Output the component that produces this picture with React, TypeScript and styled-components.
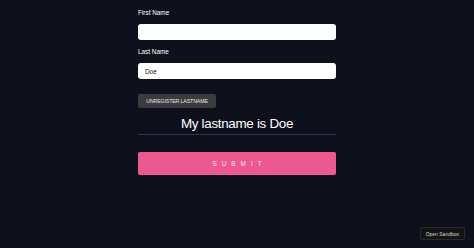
import styled, { createGlobalStyle } from "styled-components";

const GlobalStyle = createGlobalStyle`
  html, body {
    margin: 0;
    padding: 0;
    background: #0e101c;
    font-family: "Liberation Sans", Arial, sans-serif;
  }
  * { box-sizing: border-box; }
`;

const Page = styled.div`
  width: 474px;
  height: 248px;
  background: #0e101c;
  overflow: hidden;
`;

const Form = styled.form`
  width: 198px;
  margin: 0 auto;
  display: flex;
  flex-direction: column;
`;

const Label = styled.label<{ $top: number }>`
  font-size: 6.4px;
  line-height: 8px;
  color: #ffffff;
  margin-top: ${({ $top }) => $top}px;
`;

const Input = styled.input`
  margin-top: 7px;
  height: 16px;
  width: 100%;
  border: none;
  border-radius: 3px;
  background: #ffffff;
  padding: 0 7px;
  font-family: inherit;
  font-size: 6.4px;
  color: #111;
  outline: none;
`;

const GreyButton = styled.button`
  margin-top: 15px;
  align-self: flex-start;
  height: 14px;
  width: 78px;
  padding: 0;
  border: none;
  border-radius: 2px;
  background: #3a3a3f;
  color: #e6e6e6;
  font-family: inherit;
  font-size: 5.2px;
  letter-spacing: -0.1px;
  text-transform: uppercase;
`;

const Heading = styled.h1`
  margin: 8px 0 0;
  padding-bottom: 2px;
  font-weight: 400;
  font-size: 13.4px;
  letter-spacing: -0.3px;
  line-height: 16px;
  color: #ffffff;
  text-align: center;
  border-bottom: 1px solid #2c3352;
`;

const Submit = styled.button`
  margin-top: 17px;
  height: 23px;
  width: 100%;
  border: none;
  border-radius: 2px;
  background: #ec5990;
  color: #fbe6ef;
  font-family: inherit;
  font-size: 6.4px;
  letter-spacing: 5px;
  text-indent: 5px;
  text-transform: uppercase;
`;

const SandboxLink = styled.a`
  position: fixed;
  right: 9px;
  bottom: 8px;
  height: 13px;
  padding: 0 5px;
  display: flex;
  align-items: center;
  background: #141414;
  border: 1px solid #2a2a2a;
  border-radius: 2px;
  color: #d8d8d8;
  font-size: 5px;
  text-decoration: none;
`;

export default function App() {
  return (
    <Page>
      <GlobalStyle />
      <Form onSubmit={(e) => e.preventDefault()}>
        <Label $top={9}>First Name</Label>
        <Input defaultValue="" />
        <Label $top={8}>Last Name</Label>
        <Input defaultValue="Doe" />
        <GreyButton type="button">Unregister lastname</GreyButton>
        <Heading>My lastname is Doe</Heading>
        <Submit type="submit">Submit</Submit>
      </Form>
      <SandboxLink href="#">Open Sandbox</SandboxLink>
    </Page>
  );
}
